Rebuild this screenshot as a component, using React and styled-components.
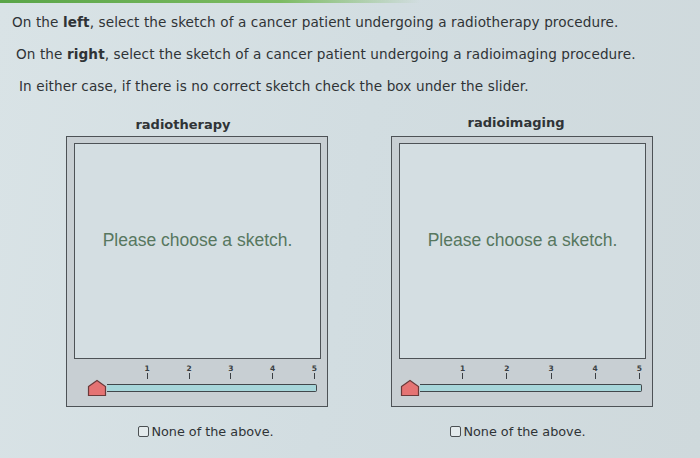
import React from 'react';
import styled, { createGlobalStyle } from 'styled-components';

const GlobalStyle = createGlobalStyle`
  html, body {
    margin: 0;
    padding: 0;
    background: #d3dde1;
  }
  body {
    width: 700px;
    height: 458px;
    overflow: hidden;
  }
`;

const Page = styled.div`
  width: 700px;
  height: 458px;
  background: linear-gradient(100deg, #d9e3e6 0%, #d2dde1 50%, #cfd9dc 100%);
  font-family: 'DejaVu Sans', Verdana, sans-serif;
  color: #2f3336;
`;

const TopBar = styled.div`
  height: 3px;
  background: linear-gradient(90deg, #5aa548 0%, #7cbb62 40%, rgba(150, 200, 130, 0) 60%);
`;

const Instructions = styled.div`
  padding: 3px 0 0 12px;
`;

const Line = styled.p`
  margin: 0;
  padding-left: ${(p) => p.indent || 0}px;
  font-size: 13.6px;
  line-height: 32px;
  letter-spacing: 0.1px;
`;

const Panels = styled.div`
  display: flex;
  gap: 63px;
  padding: 12px 0 0 66px;
`;

const Panel = styled.div`
  width: 262px;
  display: flex;
  flex-direction: column;
  align-items: center;
`;

const Title = styled.div`
  font-weight: bold;
  font-size: 13px;
  line-height: 18px;
  margin-bottom: 4px;
  transform: translate(${(p) => p.shift || 0}px, ${(p) => p.drop || 0}px);
`;

const Frame = styled.div`
  align-self: stretch;
  border: 1px solid #4d5256;
  background: #c8cfd3;
  padding: 6px 6px 0 7px;
`;

const Canvas = styled.div`
  height: 216px;
  box-sizing: border-box;
  padding-bottom: 22px;
  border: 1px solid #4d5256;
  background: #d4dee2;
  display: flex;
  align-items: center;
  justify-content: center;
  font-family: 'Liberation Sans', Arial, sans-serif;
  font-size: 17.5px;
  color: #57775f;
`;

const SliderArea = styled.div`
  height: 47px;
  padding: 6px 4px 0 ${(p) => p.inset || 0}px;
  box-sizing: border-box;
`;

const Ticks = styled.div`
  display: flex;
  margin-left: 18px;
`;

const Tick = styled.div`
  flex: 1;
  display: flex;
  flex-direction: column;
  align-items: flex-end;
  font-size: 7.5px;
  font-weight: bold;
  line-height: 8px;
  color: #3a3f43;

  &::after {
    content: '';
    width: 1px;
    height: 6px;
    margin-right: 2px;
    background: #3a3f43;
  }
`;

const Track = styled.div`
  display: flex;
  align-items: flex-end;
`;

const Thumb = styled.svg`
  width: 20px;
  height: 18px;
  flex: none;
  margin-left: -3px;
`;

const Rail = styled.div`
  flex: 1;
  height: 6px;
  margin-bottom: 5px;
  border: 1px solid #41474b;
  border-left: none;
  border-radius: 0 2px 2px 0;
  background: #a7d6da;
`;

const CheckRow = styled.label`
  display: flex;
  align-items: center;
  gap: 2px;
  margin-top: 17px;
  font-size: 12.8px;
  color: #2f3336;
  transform: translateX(${(p) => p.shift || 0}px);
`;

const Box = styled.span`
  width: 9px;
  height: 9px;
  border: 1px solid #4b5053;
  border-radius: 2px;
  background: #e4ebed;
`;

const Slider = ({ inset }) => (
  <SliderArea inset={inset}>
    <Ticks>
      {[1, 2, 3, 4, 5].map((n) => (
        <Tick key={n}>{n}</Tick>
      ))}
    </Ticks>
    <Track>
      <Thumb viewBox="0 0 20 18">
        <path d="M1.5 7.5 L10 1.5 L18.5 7.5 L18.5 16.5 L1.5 16.5 Z" fill="#e57373" stroke="#6b3a3a" strokeWidth="1.2" />
      </Thumb>
      <Rail />
    </Track>
  </SliderArea>
);

const SketchPanel = ({ title, titleShift, titleDrop, checkShift, inset }) => (
  <Panel>
    <Title shift={titleShift} drop={titleDrop}>{title}</Title>
    <Frame>
      <Canvas>Please choose a sketch.</Canvas>
      <Slider inset={inset} />
    </Frame>
    <CheckRow shift={checkShift}>
      <Box />
      None of the above.
    </CheckRow>
  </Panel>
);

export default function App() {
  return (
    <Page>
      <GlobalStyle />
      <TopBar />
      <Instructions>
        <Line>
          On the <b>left</b>, select the sketch of a cancer patient undergoing a radiotherapy procedure.
        </Line>
        <Line indent={4}>
          On the <b>right</b>, select the sketch of a cancer patient undergoing a radioimaging procedure.
        </Line>
        <Line indent={7}>In either case, if there is no correct sketch check the box under the slider.</Line>
      </Instructions>
      <Panels>
        <SketchPanel title="radiotherapy" titleShift={-14} titleDrop={2} checkShift={9} inset={16} />
        <SketchPanel title="radioimaging" titleShift={-6} checkShift={-4} inset={4} />
      </Panels>
    </Page>
  );
}
